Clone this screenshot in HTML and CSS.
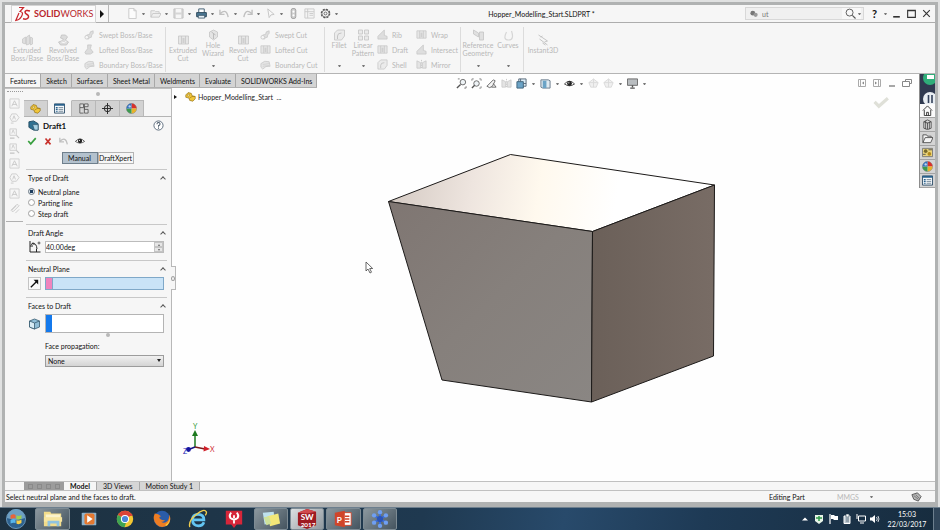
FILE: index.html
```html
<!DOCTYPE html>
<html lang="en">
<head>
    <meta charset="UTF-8">
    <title>Hopper_Modelling_Start.SLDPRT</title>
    <meta name="viewport" content="width=device-width, initial-scale=1.0">
    <link rel="stylesheet" href="styles.css">
</head>
<body>

<!-- Shared icons -->
<svg class="sprite" aria-hidden="true">
    <symbol id="i-extrude" viewBox="0 0 12 12"><path d="M1 5l3-2v7l-3-1zM5 3l3-2v9l-3 1zM9 3l2 1v6l-2 1z" fill="#dedede" stroke="#c4c4c4" stroke-width=".7"/></symbol>
    <symbol id="i-revolve" viewBox="0 0 12 12"><path d="M4 1h4l2 2-2 3 3 2-2 3H3L1 8l3-1 2-2-3-1z" fill="#dcdcdc" stroke="#c2c2c2" stroke-width=".8"/><path d="M4 8q3 2 5-1" fill="none" stroke="#f8f8f8"/></symbol>
    <symbol id="i-sweep" viewBox="0 0 12 12"><path d="M2 10q-1-4 4-4 0-4 4-4v3q-2 0-2 4-3 0-3 2z" fill="#dedede" stroke="#c6c6c6" stroke-width=".8"/><circle cx="3" cy="9" r="2" fill="#f6f6f6" stroke="#c6c6c6" stroke-width=".8"/></symbol>
    <symbol id="i-loft" viewBox="0 0 12 12"><path d="M4 1h4l-1 4 3 4-3 2H2l-1-2 3-4z" fill="#dcdcdc" stroke="#c4c4c4" stroke-width=".8"/></symbol>
    <symbol id="i-bound" viewBox="0 0 12 12"><path d="M1 5q4-4 9-2l1 5q-5-1-8 3L1 9z" fill="#e4e4e4" stroke="#c6c6c6" stroke-width=".8"/><path d="M3 6l7-1M3 8l7-1" stroke="#c6c6c6" stroke-width=".6"/></symbol>
    <symbol id="i-cut" viewBox="0 0 12 12"><path d="M1 2h10v8H1zM4 2v8M8 2v8" fill="#e6e6e6" stroke="#c6c6c6" stroke-width=".8"/><path d="M5 4h2v5H5z" fill="#cfcfcf"/></symbol>
    <symbol id="i-hole" viewBox="0 0 12 12"><path d="M2 3l4-2 4 2v5l-4 3-4-3z" fill="#e4e4e4" stroke="#c4c4c4" stroke-width=".8"/><path d="M4 3l4 3M6 5v5" stroke="#bdbdbd"/></symbol>
    <symbol id="i-fillet" viewBox="0 0 12 12"><path d="M1 4l3-3h7v6l-3 4H1z" fill="#ebebeb" stroke="#c4c4c4" stroke-width=".8"/><path d="M4 10V7q0-3 4-3" fill="none" stroke="#c4c4c4"/></symbol>
    <symbol id="i-pattern" viewBox="0 0 12 12"><path d="M1 1h4v4H1zM7 1h4v4H7zM1 7h4v4H1zM7 7h4v4H7z" fill="#eaeaea" stroke="#c8c8c8" stroke-width=".9"/></symbol>
    <symbol id="i-rib" viewBox="0 0 12 12"><path d="M1 8l7-7v6l3 1v3H1z" fill="#dedede" stroke="#c6c6c6" stroke-width=".8"/></symbol>
    <symbol id="i-mirror" viewBox="0 0 12 12"><path d="M1 2l4 2v6H1zM11 2L7 4v6h4z" fill="#e4e4e4" stroke="#c6c6c6" stroke-width=".8"/><path d="M6 1v10" stroke="#c6c6c6" stroke-dasharray="1.5 1"/></symbol>
    <symbol id="i-refgeo" viewBox="0 0 12 12"><path d="M1 1l5 3v4L1 5zM7 3h4v8H7z" fill="#e0e0e0" stroke="#c4c4c4" stroke-width=".8"/></symbol>
    <symbol id="i-curve" viewBox="0 0 12 12"><path d="M4 3Q0 11 6 11t3-9" fill="none" stroke="#d6d6d6" stroke-width="1.2"/></symbol>
    <symbol id="i-instant" viewBox="0 0 12 12"><path d="M1 1l9 6M2 5l8 6M3 3l2-1M7 8l3-1M5 9l3 2" fill="none" stroke="#c6c6c6"/></symbol>
    <symbol id="i-part" viewBox="0 0 14 12"><path d="M1 4l3-3 4 1 1 3 4 1v3l-3 3-4-1-1-3-4-1z" fill="#f0c53a" stroke="#8a6a12" stroke-width=".8"/><circle cx="4.5" cy="4.3" r="1.3" fill="#fff3b8" stroke="#8a6a12" stroke-width=".6"/><path d="M6 8l3-2 4 0" fill="none" stroke="#9b7918" stroke-width=".8"/></symbol>
    <symbol id="i-list" viewBox="0 0 12 12"><path d="M.5 1h11v10H.5z" fill="#f5f9fc" stroke="#2c4c66"/><path d="M.5 1h11v2H.5z" fill="#28618c"/><path d="M2 5h2M2 7h2M2 9h2" stroke="#28618c" stroke-width="1.2"/><path d="M5 5h5M5 7h5M5 9h5" stroke="#62788a" stroke-width=".9"/></symbol>
    <symbol id="i-ball" viewBox="0 0 12 12"><circle cx="6" cy="6" r="5.5" fill="#e8e8e8" stroke="#555" stroke-width=".5"/><path d="M6 6V.5A5.5 5.5 0 0 1 11.5 6z" fill="#d8312c"/><path d="M6 6h5.5A5.5 5.5 0 0 1 6 11.5z" fill="#e7b12b"/><path d="M6 6v5.5A5.5 5.5 0 0 1 .5 6z" fill="#3d9950"/><path d="M6 6H.5A5.5 5.5 0 0 1 6 .5z" fill="#3171c0"/><circle cx="4" cy="3.7" r="1.3" fill="#fff" opacity=".7"/></symbol>
    <symbol id="i-cube" viewBox="0 0 12 12"><path d="M1 3l5-2 5 2v6l-5 2-5-2z" fill="#8fbdd6" stroke="#35596e" stroke-width=".8"/><path d="M1 3l5 2v6l-5-2z" fill="#d8ecf5" stroke="#35596e" stroke-width=".8"/><path d="M6 5l5-2" stroke="#35596e" stroke-width=".8"/></symbol>
    <symbol id="i-eye" viewBox="0 0 12 12"><path d="M.5 6.500Q6 .5 11.500 6.500 6 10.500.5 6.500z" fill="#fff" stroke="#333" stroke-width=".9"/><circle cx="6" cy="6" r="2.600" fill="#222"/><circle cx="5.300" cy="5.200" r=".7" fill="#fff"/></symbol>
    <symbol id="i-undo" viewBox="0 0 12 12"><path d="M1 2v5h5M1.500 6Q8 0 10 10" fill="none" stroke="#c0c0c0" stroke-width="1.500"/></symbol>
    <symbol id="i-page" viewBox="0 0 12 12"><path d="M2 .5h5.500L10 3v8.500H2zM7.500.5V3H10" fill="#fcfcfc" stroke="#c8c8c8"/></symbol>
    <symbol id="i-open" viewBox="0 0 12 12"><path d="M1 10V3h4l1 1h4v2M1 10l2-4h9l-2 4z" fill="#efefef" stroke="#c8c8c8"/></symbol>
    <symbol id="i-save" viewBox="0 0 12 12"><path d="M1 1h10v10H1z" fill="#d6d6d6" stroke="#c2c2c2"/><path d="M3 1h6v4H3zM3 7h6v4H3z" fill="#f6f6f6"/></symbol>
    <symbol id="i-print" viewBox="0 0 12 12"><path d="M3 5V1h6v4" fill="#fff" stroke="#37566b"/><path d="M.7 5h10.600v4.500H.7z" fill="#4c7894" stroke="#284558"/><path d="M2.500 8h7v3h-7z" fill="#e6f0f6" stroke="#284558" stroke-width=".8"/></symbol>
    <symbol id="i-pointer" viewBox="0 0 12 12"><path d="M3 1l7 6-3.500.5-2 3z" fill="#f8f8f8" stroke="#c4c4c4"/></symbol>
    <symbol id="i-light" viewBox="0 0 12 12"><rect x="3.500" y=".5" width="5" height="11" rx="2" fill="#ccc" stroke="#a0a0a0"/><circle cx="6" cy="4" r="1.200" fill="#fff"/><circle cx="6" cy="8" r="1.200" fill="#fff"/></symbol>
    <symbol id="i-props" viewBox="0 0 12 12"><path d="M1 1h10v10H1zM4 1v10M1 4h10M6 6h4M6 8h4" fill="#f4f4f4" stroke="#cacaca"/></symbol>
    <symbol id="i-gear" viewBox="0 0 12 12"><circle cx="6" cy="6" r="4.500" fill="none" stroke="#555" stroke-width="1.500" stroke-dasharray="2.200 1.330"/><circle cx="6" cy="6" r="3.900" fill="#f8f8f8" stroke="#555" stroke-width=".8"/><circle cx="6" cy="6" r="1.600" fill="none" stroke="#555" stroke-width=".9"/></symbol>
    <symbol id="i-zoomfit" viewBox="0 0 12 12"><circle cx="7.500" cy="4.500" r="3" fill="#eef3f6" stroke="#666"/><path d="M5 7l-4 4" stroke="#555" stroke-width="1.500"/><path d="M2 1h2M11 9v2H9" stroke="#777" fill="none"/></symbol>
    <symbol id="i-ghost" viewBox="0 0 12 12"><path d="M1 5l5-4 5 4-2 5H3zM6 1v9M1 5h10" fill="#f0f0f0" stroke="#dadada"/></symbol>
    <symbol id="i-screen" viewBox="0 0 12 12"><path d="M.5 1h11v7H.5z" fill="#b9bdc0" stroke="#666"/><path d="M6 8v2M3.500 11h5" stroke="#555" stroke-width="1.500"/></symbol>
    <symbol id="i-views" viewBox="0 0 12 12"><path d="M3 1h8v8H3z" fill="#dcebf4" stroke="#567"/><path d="M1 4h7v7H1z" fill="#6ba3c6" stroke="#3c6078"/><path d="M5 1v3M8 6h3" stroke="#567"/></symbol>
    <symbol id="i-note" viewBox="0 0 12 12"><path d="M1 1h10v10H1z" fill="#f6f6f6" stroke="#d0d0d0"/><path d="M3 9l3-6 3 6M4 7h4" fill="none" stroke="#c8c8c8"/></symbol>
    <symbol id="i-balloon" viewBox="0 0 12 12"><path d="M3 1h5l3 4-3 4H3L1 5z" fill="#f6f6f6" stroke="#cdcdcd"/><path d="M4 7l1.500-4L7 7M2 11h3" fill="none" stroke="#c8c8c8"/></symbol>
    <symbol id="i-zoomnote" viewBox="0 0 12 12"><path d="M1 1h7v7H1zM3 6l1.500-4L6 6" fill="#f6f6f6" stroke="#cdcdcd"/><path d="M8 8l3 3M1 11h5" stroke="#c4c4c4" stroke-width="1.300"/></symbol>
    <symbol id="i-clip" viewBox="0 0 12 12"><path d="M2 8l6-6q2-1 3 1L5 9q-2 1-2-1l5-5M7 11l4-4" fill="none" stroke="#cbcbcb"/></symbol>
</svg>

<div class="desktop">
<div class="window">

    <header class="titlebar">
        <div class="brand">
            <svg class="brand-mark" viewBox="0 0 16 16"><path d="M4 1.500h4.500L5 5.500q4 .5 1.500 5Q4.500 14 .8 14.500L4 7" fill="none" stroke="#c8262c" stroke-width="1.200"/><path d="M15 5q-4.500-1.500-5 1 0 1.500 2 2.500 2.500 1.500 1 3.500-1.500 1.800-5 .8" fill="none" stroke="#c8262c" stroke-width="1.500"/></svg>
            <span class="brand-name"><b>SOLID</b>WORKS</span>
        </div>
        <button class="flyout" aria-label="Show menus"><i class="tri-right"></i></button>
        <div class="quick-tools">
            <button aria-label="New"><svg><use href="#i-page"/></svg></button><i class="caret"></i>
            <button aria-label="Open"><svg><use href="#i-open"/></svg></button><i class="caret"></i>
            <button aria-label="Save"><svg><use href="#i-save"/></svg></button><i class="caret"></i>
            <button aria-label="Print"><svg><use href="#i-print"/></svg></button><i class="caret"></i>
            <button aria-label="Undo"><svg><use href="#i-undo"/></svg></button><i class="caret"></i>
            <button aria-label="Redo"><svg class="flip"><use href="#i-undo"/></svg></button><i class="caret"></i>
            <button aria-label="Select"><svg><use href="#i-pointer"/></svg></button><i class="caret"></i>
            <button aria-label="Rebuild"><svg><use href="#i-light"/></svg></button>
            <button aria-label="File properties"><svg><use href="#i-props"/></svg></button>
            <button aria-label="Options"><svg><use href="#i-gear"/></svg></button><i class="caret"></i>
        </div>
        <h1 class="doc-title">Hopper_Modelling_Start.SLDPRT *</h1>
        <div class="search">
            <svg class="search-kind" viewBox="0 0 10 10"><circle cx="3.500" cy="4" r="3" fill="#777"/><circle cx="7" cy="6" r="2.600" fill="#999"/></svg>
            <input type="text" value="ut" aria-label="Search commands">
            <button aria-label="Search"><svg viewBox="0 0 12 12"><circle cx="5" cy="5" r="3.800" fill="none" stroke="#555"/><path d="M8 8l3.500 3.500" stroke="#555" stroke-width="1.300"/></svg><i class="caret"></i></button>
        </div>
        <div class="window-buttons">
            <button class="help" aria-label="Help">?</button><i class="caret"></i>
            <button aria-label="Minimize"><svg viewBox="0 0 10 10"><path d="M2 8h6" stroke="#333" stroke-width="1.500"/></svg></button>
            <button aria-label="Maximize"><svg viewBox="0 0 10 10"><path d="M1.500 2h7v6.500h-7zM1 2.500h8" fill="none" stroke="#333"/></svg></button>
            <button aria-label="Close"><svg viewBox="0 0 10 10"><path d="M2 2l6 6M8 2L2 8" stroke="#333"/></svg></button>
        </div>
    </header>

    <div class="ribbon">
        <div class="group">
            <button class="big wide"><svg><use href="#i-extrude"/></svg>Extruded Boss/Base</button>
            <button class="big wide"><svg><use href="#i-revolve"/></svg>Revolved Boss/Base</button>
            <div class="stack">
                <button><svg><use href="#i-sweep"/></svg>Swept Boss/Base</button>
                <button><svg><use href="#i-loft"/></svg>Lofted Boss/Base</button>
                <button><svg><use href="#i-bound"/></svg>Boundary Boss/Base</button>
            </div>
        </div>
        <div class="group">
            <button class="big"><svg><use href="#i-cut"/></svg>Extruded Cut</button>
            <button class="big menu"><svg><use href="#i-hole"/></svg>Hole Wizard<i class="caret"></i></button>
            <button class="big"><svg><use href="#i-cut"/></svg>Revolved Cut</button>
            <div class="stack">
                <button><svg><use href="#i-sweep"/></svg>Swept Cut</button>
                <button><svg><use href="#i-cut"/></svg>Lofted Cut</button>
                <button><svg><use href="#i-bound"/></svg>Boundary Cut</button>
            </div>
        </div>
        <div class="group">
            <button class="big slim menu"><svg><use href="#i-fillet"/></svg>Fillet<i class="caret"></i></button>
            <button class="big slim menu"><svg><use href="#i-pattern"/></svg>Linear Pattern<i class="caret"></i></button>
            <div class="stack">
                <button><svg><use href="#i-rib"/></svg>Rib</button>
                <button><svg><use href="#i-cut"/></svg>Draft</button>
                <button><svg><use href="#i-fillet"/></svg>Shell</button>
            </div>
            <div class="stack">
                <button><svg><use href="#i-cut"/></svg>Wrap</button>
                <button><svg><use href="#i-rib"/></svg>Intersect</button>
                <button><svg><use href="#i-mirror"/></svg>Mirror</button>
            </div>
        </div>
        <div class="group">
            <button class="big menu"><svg><use href="#i-refgeo"/></svg>Reference Geometry<i class="caret"></i></button>
            <button class="big menu"><svg><use href="#i-curve"/></svg>Curves<i class="caret"></i></button>
        </div>
        <div class="group">
            <button class="big wide"><svg><use href="#i-instant"/></svg>Instant3D</button>
        </div>
    </div>

    <div class="workspace">
        <div class="work-column">
            <div class="tab-row">
                <nav class="command-tabs">
                    <button class="active">Features</button>
                    <button>Sketch</button>
                    <button>Surfaces</button>
                    <button>Sheet Metal</button>
                    <button>Weldments</button>
                    <button>Evaluate</button>
                    <button>SOLIDWORKS Add-Ins</button>
                </nav>
                <div class="doc-buttons">
                    <button aria-label="Dock left"><svg viewBox="0 0 10 10"><path d="M1.500 1.500h7v7h-7zM3.500 1.500v7" fill="none" stroke="#aaa"/><path d="M7 3.500v3L5 5z" fill="#888"/></svg></button>
                    <button aria-label="Dock right"><svg viewBox="0 0 10 10"><path d="M1.500 1.500h7v7h-7zM6.500 1.500v7" fill="none" stroke="#aaa"/><path d="M3 3.500v3L5 5z" fill="#888"/></svg></button>
                    <button aria-label="Minimize document"><svg viewBox="0 0 10 10"><path d="M2 8h6" stroke="#777" stroke-width="1.300"/></svg></button>
                    <button aria-label="Restore document"><svg viewBox="0 0 10 10"><path d="M3.500 3.500v-2h6v4h-2M.5 3.500h7v5h-7z" fill="none" stroke="#888"/></svg></button>
                </div>
            </div>

            <div class="document">
                <aside class="tool-strip">
                    <button aria-label="Smart dimension"><svg><use href="#i-note"/></svg></button>
                    <button aria-label="Balloon"><svg><use href="#i-balloon"/></svg></button>
                    <button aria-label="Note"><svg><use href="#i-zoomnote"/></svg></button>
                    <button aria-label="Surface finish"><svg><use href="#i-zoomnote"/></svg></button>
                    <button aria-label="Weld symbol"><svg><use href="#i-note"/></svg></button>
                    <button aria-label="Datum"><svg><use href="#i-balloon"/></svg></button>
                    <button aria-label="Tolerance"><svg><use href="#i-note"/></svg></button>
                    <button aria-label="Attach"><svg><use href="#i-clip"/></svg></button>
                </aside>

                <section class="manager">
                    <div class="grip"></div>
                    <div class="manager-tabs">
                        <button aria-label="Feature tree"><svg><use href="#i-part"/></svg></button>
                        <button class="active" aria-label="Property manager"><svg><use href="#i-list"/></svg></button>
                        <button aria-label="Configurations"><svg viewBox="0 0 12 12"><path d="M2 1h4v4H2zM2 5v6h4M7 1h4v3H7v3h4v4H7z" fill="#ddd" stroke="#555" stroke-width=".9"/></svg></button>
                        <button aria-label="DimXpert"><svg viewBox="0 0 12 12"><circle cx="6" cy="6" r="3.500" fill="none" stroke="#222"/><path d="M6 0v12M0 6h12" stroke="#222"/></svg></button>
                        <button aria-label="Display manager"><svg><use href="#i-ball"/></svg></button>
                    </div>

                    <div class="feature-title">
                        <svg viewBox="0 0 12 12"><path d="M1 2l5-1 5 3v7H6L1 8z" fill="#2f7192" stroke="#214a60"/><path d="M5 5h6v6H7z" fill="#a9d2e4" stroke="#315b70" stroke-width=".8"/></svg>
                        <h2>Draft1</h2>
                        <button aria-label="Help"><svg viewBox="0 0 12 12"><circle cx="6" cy="6" r="5" fill="#fff" stroke="#567"/><path d="M4.300 4.600q0-1.800 1.700-1.800t1.700 1.500Q7.700 5.400 6 6.300v1M6 8.300v1.200" fill="none" stroke="#456" stroke-width="1.100"/></svg></button>
                    </div>
                    <div class="confirm-row">
                        <button aria-label="OK"><svg viewBox="0 0 12 12"><path d="M1.500 6l3 3.500L10.500 2.500" fill="none" stroke="#3aa040" stroke-width="2"/></svg></button>
                        <button aria-label="Cancel"><svg viewBox="0 0 12 12"><path d="M3 3l6 7M9 3l-6 7" stroke="#c8322c" stroke-width="2"/></svg></button>
                        <button aria-label="Undo"><svg><use href="#i-undo"/></svg></button>
                        <button aria-label="Preview"><svg><use href="#i-eye"/></svg></button>
                    </div>
                    <div class="mode-switch">
                        <button class="active">Manual</button><button>DraftXpert</button>
                    </div>

                    <fieldset class="prop-group">
                        <div class="prop-head"><h3>Type of Draft</h3><i class="chevron"></i></div>
                        <label class="radio"><input type="radio" name="draft" checked>Neutral plane</label>
                        <label class="radio"><input type="radio" name="draft">Parting line</label>
                        <label class="radio"><input type="radio" name="draft">Step draft</label>
                    </fieldset>

                    <fieldset class="prop-group">
                        <div class="prop-head"><h3><label for="angle">Draft Angle</label></h3><i class="chevron"></i></div>
                        <div class="prop-row">
                            <svg class="prop-icon" viewBox="0 0 12 12"><path d="M1.500 0v11H12M1.500 5h3M8 11V8M4 2q4 0 4.500 6M3 4l1-2 2 2" fill="none" stroke="#222"/><circle cx="10.500" cy="2" r="1" fill="none" stroke="#222" stroke-width=".7"/></svg>
                            <div class="spin">
                                <input type="text" id="angle" value="40.00deg">
                                <span class="spin-buttons"><button aria-label="Increase"></button><button aria-label="Decrease"></button></span>
                            </div>
                        </div>
                    </fieldset>

                    <fieldset class="prop-group">
                        <div class="prop-head"><h3><label for="plane">Neutral Plane</label></h3><i class="chevron"></i></div>
                        <div class="prop-row">
                            <button class="reverse" aria-label="Reverse direction"><svg viewBox="0 0 12 12"><path d="M2 10l6-6" stroke="#111" stroke-width="1.500"/><path d="M5 2h5v5z" fill="#111"/></svg></button>
                            <div class="pick pick-pink"><input type="text" id="plane"></div>
                        </div>
                    </fieldset>

                    <fieldset class="prop-group">
                        <div class="prop-head"><h3><label for="faces">Faces to Draft</label></h3><i class="chevron"></i></div>
                        <div class="prop-row">
                            <svg class="prop-icon"><use href="#i-cube"/></svg>
                            <div class="pick pick-blue"><textarea id="faces" rows="1"></textarea></div>
                        </div>
                        <div class="grip grip-faces"></div>
                        <div class="propagation">
                            <label for="propagation">Face propagation:</label>
                            <div class="select-wrap">
                                <select id="propagation"><option>None</option></select>
                                <i class="tri-down"></i>
                            </div>
                        </div>
                    </fieldset>
                    <button class="collapse" aria-label="Collapse panel"></button>
                </section>

                <main class="viewport">
                    <svg class="scene" viewBox="0 0 747 393">
                        <defs>
                            <linearGradient id="top" gradientUnits="userSpaceOnUse" x1="220" y1="105" x2="440" y2="140">
                                <stop offset="0" stop-color="#d5cbc4"/>
                                <stop offset=".35" stop-color="#eee5df"/>
                                <stop offset=".65" stop-color="#fff9ee"/>
                                <stop offset="1" stop-color="#ffffff"/>
                            </linearGradient>
                            <linearGradient id="front" x1="0" y1="0" x2="1" y2="1">
                                <stop offset="0" stop-color="#7f7672"/>
                                <stop offset=".5" stop-color="#86807c"/>
                                <stop offset="1" stop-color="#8a8683"/>
                            </linearGradient>
                            <linearGradient id="side" x1="0" y1="0" x2="1" y2="0">
                                <stop offset="0" stop-color="#6b6059"/>
                                <stop offset="1" stop-color="#786c65"/>
                            </linearGradient>
                        </defs>
                        <g stroke="#1c1a19" stroke-width="1" stroke-linejoin="round">
                            <path d="M216.500 113.500L338.500 66.500 542.500 97 420.500 143.500z" fill="url(#top)"/>
                            <path d="M216.500 113.500L420.500 143.500 419.500 314 270 292z" fill="url(#front)"/>
                            <path d="M420.500 143.500L542.500 97 541.500 268 419.500 314z" fill="url(#side)"/>
                        </g>
                        <path d="M194 174v9l2-2 2 4 1.500-.8-1.800-3.700h3z" fill="#fff" stroke="#444" stroke-width=".8"/>
                        <!-- Axis triad -->
                        <path d="M23 359v-13" stroke="#1d7a1f" stroke-width="1.500"/><path d="M20 348l3-6 3 6z" fill="#1d7a1f"/>
                        <path d="M23 359l10 2" stroke="#7d1a1a" stroke-width="1.500"/><path d="M32 358l6 3-6.500 2.500z" fill="#d0202a"/>
                        <path d="M23 359l-5 2" stroke="#161683" stroke-width="1.500"/><circle cx="16.500" cy="361.500" r="2.400" fill="#1414a0"/>
                        <g class="axis"><text x="21" y="341" fill="#2f9a35">Y</text><text x="38" y="364" fill="#d0303a">X</text><text x="11" y="366" fill="#2222b0">Z</text></g>
                    </svg>
                    <div class="view-tools">
                        <button aria-label="Zoom to fit"><svg><use href="#i-zoomfit"/></svg></button>
                        <button aria-label="Zoom to area"><svg viewBox="0 0 12 12"><circle cx="6" cy="6" r="3" fill="#eef3f6" stroke="#666"/><path d="M4 8l-3 3" stroke="#555" stroke-width="1.500"/><path d="M1 3V1h2M9 1h2v2M11 9v2H9" fill="none" stroke="#888"/></svg></button>
                        <button aria-label="Previous view"><svg viewBox="0 0 12 12"><path d="M1 9l7-7 2 1-3 6q-3 3-6 0zM8 6l3 4H6" fill="#f4f4f4" stroke="#666"/></svg></button>
                        <button aria-label="Section view"><svg><use href="#i-mirror"/></svg></button>
                        <button aria-label="View orientation"><svg><use href="#i-views"/></svg></button><i class="caret"></i>
                        <button aria-label="Display style"><svg viewBox="0 0 12 12"><path d="M1 2h8l2 1v8H3L1 10z" fill="#dfeaf1" stroke="#678"/><path d="M3 3h4v8H3z" fill="#6ba3c6"/></svg></button><i class="caret"></i>
                        <button aria-label="Hide or show items"><svg><use href="#i-eye"/></svg></button><i class="caret"></i>
                        <button aria-label="Edit appearance"><svg><use href="#i-ghost"/></svg></button>
                        <button aria-label="Apply scene"><svg><use href="#i-ghost"/></svg></button><i class="caret"></i>
                        <button aria-label="View settings"><svg><use href="#i-screen"/></svg></button><i class="caret"></i>
                    </div>
                    <div class="flyout-tree"><i class="tri-right small"></i><svg><use href="#i-part"/></svg><span>Hopper_Modelling_Start &nbsp;...</span></div>
                    <button class="confirm-corner" aria-label="Accept"><svg viewBox="0 0 16 12"><path d="M1.500 5.500l4 4L14 2" fill="none" stroke="#dfe0d8" stroke-width="3"/></svg></button>
                </main>
            </div>
        </div>

        <aside class="task-pane">
            <div class="recorder">
                <svg viewBox="0 0 16 30"><circle cx="10" cy="4" r="7" fill="#2fae79"/><path d="M7 1h7v4H7z" fill="#fff"/><circle cx="10" cy="25" r="7" fill="#e8edf2"/><path d="M8.500 21v8M12 21v8" stroke="#33415a" stroke-width="1.600"/></svg>
            </div>
            <button class="active" aria-label="Resources"><svg viewBox="0 0 12 12"><path d="M1 6l5-5 5 5M2.500 5.500v6h7v-6M5 11.500V8h2v3.500" fill="none" stroke="#333"/></svg></button>
            <button aria-label="Design library"><svg viewBox="0 0 12 12"><path d="M2 3l4-2 4 2v7l-4 1.500L2 10zM4 2v9M6 4v7M8 3v8M2 3l4 1.500L10 3" fill="#ddd" stroke="#444" stroke-width=".9"/></svg></button>
            <button aria-label="File explorer"><svg viewBox="0 0 12 12"><path d="M1 10.500V2h4l1 1.500h4V5M1 10.500L3.500 5H12l-2.500 5.500z" fill="#f4f4f4" stroke="#444" stroke-width=".9"/></svg></button>
            <button aria-label="View palette"><svg viewBox="0 0 12 12"><path d="M.5 1.500h11v9H.5z" fill="#ebd47a" stroke="#777"/><circle cx="4" cy="4.500" r="2" fill="#776a2c"/><circle cx="8" cy="7.500" r="2" fill="#b18a1c"/><path d="M7 3h4M1 8h3" stroke="#555"/></svg></button>
            <button aria-label="Appearances"><svg><use href="#i-ball"/></svg></button>
            <button aria-label="Custom properties"><svg><use href="#i-list"/></svg></button>
        </aside>
    </div>

    <div class="sheet-tabs">
        <div class="sheet-nav"><i></i><i></i><i></i><i></i></div>
        <button class="active">Model</button>
        <button>3D Views</button>
        <button>Motion Study 1</button>
    </div>

    <footer class="status">
        <span class="hint">Select neutral plane and the faces to draft.</span>
        <span class="mode">Editing Part</span>
        <span class="units">MMGS<i class="caret"></i></span>
        <svg class="tag" viewBox="0 0 12 12"><path d="M1 4l6-2 4 4-3 5-5-2z" fill="#b5b5b5" stroke="#555"/><path d="M3 5l5 4M5 4l4 4" stroke="#666" stroke-width=".8"/></svg>
    </footer>
</div>

<div class="taskbar">
    <div class="apps">
        <button aria-label="Start"><svg viewBox="0 0 22 22"><circle cx="11" cy="11" r="10.500" fill="#2c618f" stroke="#6f9cbd"/><path d="M1 10a10 10 0 0 1 20 0q-10 4-20 0z" fill="#6d9fc2"/><path d="M5 7q3-2 5.500-.5v4Q8 9.500 5 11z" fill="#e8643a"/><path d="M11.500 7q3 1.500 5.500-.5v4q-3 2-5.500.5z" fill="#9fcf4c"/><path d="M5 12q3-1.500 5.500-.5v4Q8 14.500 5 16z" fill="#57b5ea"/><path d="M11.500 12q3 1.500 5.500-.5v4q-3 2-5.500.5z" fill="#f8cf47"/></svg></button>
        <button class="open" aria-label="Explorer"><svg viewBox="0 0 22 22"><path d="M1 3h7l1 2h11v14H1z" fill="#f2dc8b"/><path d="M3 6h16v5H3z" fill="#fbf3cc"/><path d="M1 9h20v5H1z" fill="#f7e59f"/><path d="M5 13h13v6h-3v-3H8v3H5z" fill="#8fc3e0"/></svg></button>
        <button aria-label="Media player"><svg viewBox="0 0 22 22"><rect x="3" y="4" width="16" height="14" rx="1" fill="#8eb3cd"/><rect x="6" y="5" width="11" height="12" rx="2" fill="#e47830"/><path d="M9 7l6 4-6 4z" fill="#fff"/></svg></button>
        <button aria-label="Chrome"><svg viewBox="0 0 22 22"><circle cx="11" cy="11" r="9" fill="#f3c732"/><path d="M11 11L3.200 6.500A9 9 0 0 1 18.800 6.500z" fill="#da4436"/><path d="M3.200 6.500A9 9 0 0 0 10.500 20L13 12z" fill="#3fa453"/><path d="M11 6.500h8" stroke="#da4436" stroke-width="2"/><circle cx="11" cy="11" r="4.500" fill="#fff"/><circle cx="11" cy="11" r="3.400" fill="#4a86d8"/></svg></button>
        <button aria-label="Firefox"><svg viewBox="0 0 22 22"><circle cx="11" cy="11" r="9" fill="#2a5ca8"/><path d="M3 5q-3 7 2 12t12 1q5-5 2-12 0 6-3 8t-6 0q4 0 4-2-4 1-6-2 0-2 2-2-3-3-7-3z" fill="#ed7d23"/><path d="M15 17q5-3 4-9 2 8-4 11z" fill="#f8c936"/></svg></button>
        <button aria-label="Internet Explorer"><svg viewBox="0 0 22 22"><path d="M17.500 14.500Q16 18.500 11.500 18.500 5 18 5 12t6-6q6.500 0 6.500 6H6" fill="none" stroke="#63c5f2" stroke-width="3"/><path d="M2 20Q0 13 9 6t11-3q1 1-1 4" fill="none" stroke="#f1cf4e" stroke-width="1.500"/></svg></button>
        <button aria-label="Capture"><svg viewBox="0 0 22 22"><path d="M2 2h18v15h-6l-3 4-3-4H2z" fill="#d6263a"/><path d="M8 4q-3 3-1 6 4 3 8 0 2-3-1-6M11 7v3M11 12v4" fill="none" stroke="#fff" stroke-width="2"/></svg></button>
        <button class="open" aria-label="Sticky notes"><svg viewBox="0 0 22 22"><path d="M2 4l12-1 1 12-11 2z" fill="#bfe1ec"/><path d="M7 8l12-3 2 11-11 3z" fill="#f3e878"/><path d="M3 9l6-1 2 8-5 2z" fill="#cfe29a"/></svg></button>
        <button class="open lit" aria-label="SOLIDWORKS 2017"><svg viewBox="0 0 22 22"><path d="M1 4l10-4 10 3v15l-10 4-10-4z" fill="#9e1b22"/><path d="M1 4l10-4 10 3-10 2z" fill="#d14a4e"/><text x="4" y="12" class="sw">SW</text><text x="4" y="20" class="year">2017</text></svg></button>
        <button class="open" aria-label="PowerPoint"><svg viewBox="0 0 22 22"><path d="M10 4h10v14H10z" fill="#fff" stroke="#d0452a"/><path d="M13 8h5M13 11h5M13 14h5" stroke="#d0452a" stroke-width="1.500"/><path d="M2 4l11-2v18L2 18z" fill="#d0452a"/><text x="4" y="15" class="ppt">P</text></svg></button>
        <button class="open" aria-label="GoToWebinar"><svg viewBox="0 0 22 22"><g stroke="#3c6ed8" stroke-width="2.200"><path d="M11 3v16M4 7l14 8M18 7L4 15"/></g><g fill="#6f9ff2"><circle cx="11" cy="3.500" r="2.400"/><circle cx="11" cy="18.500" r="2.400"/><circle cx="4.500" cy="7" r="2.400"/><circle cx="17.500" cy="15" r="2.400"/><circle cx="17.500" cy="7" r="2.400"/><circle cx="4.500" cy="15" r="2.400"/></g><circle cx="11" cy="11" r="3.400" fill="#2b54b8"/></svg></button>
    </div>
    <div class="tray">
        <svg viewBox="0 0 10 10"><path d="M2 6.500L5 3.500l3 3z" fill="#fff"/></svg>
        <svg viewBox="0 0 10 10"><path d="M1 1h8v6L5 10 1 7z" fill="#e8f4e8"/><path d="M2 4h6M5 2v5" stroke="#2f9a4a" stroke-width="1.500"/></svg>
        <svg viewBox="0 0 10 10"><path d="M2 0v10" stroke="#fff" stroke-width="1.200"/><path d="M3 1h3l1 1h3v4H6L5 5H3z" fill="#fff"/></svg>
        <svg viewBox="0 0 10 10"><path d="M2 2h6v7.500H2z" fill="#b9c5ce" stroke="#fff"/><path d="M4 0h3v3H4zM4 5h3M4 7h3" fill="#fff" stroke="#34495c" stroke-width=".6"/></svg>
        <svg viewBox="0 0 10 10"><path d="M2.500 2h7v5h-7zM4 9h4M1 0v5" fill="none" stroke="#fff"/></svg>
        <svg viewBox="0 0 10 10"><path d="M0 3.500h2L5 1v8L2 6.500H0z" fill="#fff"/><path d="M6.500 3q1.500 2 0 4M8 2q2 3 0 6" fill="none" stroke="#fff" stroke-width=".8"/></svg>
        <div class="clock"><span>15:03</span><span>22/03/2017</span></div>
        <button class="show-desktop" aria-label="Show desktop"></button>
    </div>
</div>
</div>

</body>
</html>
```

FILE: styles.css
```css
* {
    box-sizing: border-box;
}

body {
    margin: 0;
    font-family: Lato, "Open Sans", sans-serif;
    font-size: 7px;
    line-height: 8px;
    color: #111;
}

button,
input,
select,
textarea {
    font: inherit;
    color: inherit;
    margin: 0;
    padding: 0;
    border: none;
    background: none;
    outline: none;
}

button {
    display: flex;
    align-items: center;
    justify-content: center;
    flex-shrink: 0;
}

h1, h2, h3 {
    margin: 0;
    font-size: inherit;
    font-weight: normal;
}

svg {
    display: block;
    flex-shrink: 0;
    width: 11px;
    height: 11px;
}

.sprite {
    position: absolute;
    width: 0;
    height: 0;
}

.flip {
    transform: scaleX(-1);
}

.caret {
    flex-shrink: 0;
    border: 1px solid transparent;
    border-top: 2px solid #777;
    border-bottom: none;
    width: 3px;
}

.tri-right {
    border: 4px solid transparent;
    border-left: 4px solid #111;
    border-right: none;
}

.tri-right.small {
    border-width: 2px;
    border-left-width: 3px;
}

/* Window frame */
.desktop {
    display: flex;
    flex-direction: column;
    height: 100vh;
    background: #e0e1e1;
}

.window {
    flex: 1;
    min-height: 0;
    display: flex;
    flex-direction: column;
    margin: 2px 2px 0;
    border: 3px solid #b0b2b2;
    border-bottom-width: 5px;
    background: #f6f6f6;
}

/* Title bar */
.titlebar {
    display: flex;
    align-items: center;
    height: 18px;
    border-bottom: 1px solid #adadad;
}

.brand {
    display: flex;
    align-items: center;
    gap: 3px;
    height: 18px;
    width: 85px;
    margin-left: 6px;
    padding-left: 3px;
    border: 1px solid #d4d4d4;
    background: #fbfbfb;
}

.brand-mark {
    width: 16px;
    height: 16px;
}

.brand-name {
    font-size: 9px;
    color: #b8272d;
}

.flyout {
    width: 13px;
    height: 17px;
    border-right: 1px solid #b8b8b8;
}

.quick-tools {
    display: flex;
    align-items: center;
    gap: 4px;
    margin-left: 17px;
}

.quick-tools button {
    width: 12px;
}

.doc-title {
    flex: 1;
    text-align: center;
}

.search {
    display: flex;
    align-items: center;
    gap: 4px;
    width: 119px;
    height: 13px;
    padding: 0 2px 0 4px;
    border: 1px solid #d8d8d8;
    background: #f0f0f0;
}

.search-kind {
    width: 8px;
    height: 8px;
}

.search input {
    flex: 1;
    min-width: 0;
    color: #777;
}

.search button {
    gap: 2px;
    height: 11px;
    padding-left: 3px;
    background: #f8f8f8;
}

.window-buttons {
    display: flex;
    align-items: center;
    gap: 4px;
    margin: 0 3px 0 5px;
}

.window-buttons button {
    width: 11px;
}

.window-buttons .help {
    font-size: 11px;
    font-weight: bold;
}

/* Ribbon */
.ribbon {
    display: grid;
    grid-template-columns: 161px 159px 136px 63px 1fr;
    height: 51px;
    padding-top: 4px;
    border-bottom: 1px solid #b4b4b4;
    color: #b8b8b8;
}

.group {
    display: flex;
    height: 45px;
    padding-left: 2px;
    border-right: 1px solid #dcdcdc;
}

.group:first-child {
    padding-left: 5px;
    gap: 2px;
}

.group:last-child {
    border-right: none;
}

.big {
    position: relative;
    flex-direction: column;
    justify-content: flex-start;
    width: 30px;
    padding-top: 7px;
    text-align: center;
}

.big.wide {
    width: 34px;
}

.big.slim {
    width: 24px;
}

.big.menu {
    padding-top: 2px;
}

.big svg {
    width: 13px;
    height: 12px;
}

.big .caret {
    position: absolute;
    bottom: 5px;
}

.stack {
    display: flex;
    flex-direction: column;
    padding-left: 2px;
}

.group .stack + .stack {
    padding-left: 8px;
}

.stack button {
    justify-content: flex-start;
    gap: 4px;
    height: 15px;
    white-space: nowrap;
}

/* Work area */
.workspace {
    flex: 1;
    min-height: 0;
    display: flex;
    background: #fefefe;
}

.work-column {
    flex: 1;
    min-width: 0;
    display: flex;
    flex-direction: column;
}

.tab-row {
    display: flex;
    justify-content: space-between;
    height: 14px;
}

.command-tabs {
    display: flex;
    border-bottom: 1px solid #b0b0b0;
}

.command-tabs button {
    padding: 0 4px 0 5px;
    border-right: 1px solid #a8a8a8;
    background: #d4d4d4;
}

.command-tabs .active {
    background: #f6f6f6;
}

.doc-buttons {
    display: flex;
    align-items: center;
    gap: 5px;
    padding: 4px 7px 0 0;
}

.doc-buttons svg {
    width: 10px;
    height: 10px;
}

.document {
    flex: 1;
    min-height: 0;
    display: flex;
}

.tool-strip {
    display: flex;
    flex-direction: column;
    align-items: center;
    gap: 4px;
    width: 19px;
    padding-top: 10px;
    border-top: 1px solid #c0c0c0;
    background: #f6f6f6;
}

.tool-strip::before {
    content: "";
    width: 16px;
    margin-top: -8px;
    margin-bottom: 2px;
    border-top: 1px dotted #999;
}

.tool-strip::after {
    content: "";
    width: 17px;
    margin-top: 3px;
    border-top: 1px solid #b0b0b0;
}

/* Property manager */
.manager {
    position: relative;
    width: 148px;
    border-top: 1px solid #c0c0c0;
    border-right: 1px solid #b8b8b8;
    background: #f6f6f6;
}

.grip {
    width: 4px;
    height: 4px;
    margin: 3px auto 4px;
    border-radius: 2px;
    background: #b8b8b8;
}

.manager-tabs {
    display: flex;
    border-bottom: 1px solid #b4b4b4;
}

.manager-tabs button {
    width: 24px;
    height: 16px;
    border: 1px solid #b8b8b8;
    border-left: none;
    border-bottom: none;
    background: #d2d2d2;
}

.manager-tabs .active {
    border-top-color: #f6f6f6;
    background: #f6f6f6;
}

.feature-title {
    display: flex;
    align-items: center;
    gap: 4px;
    height: 17px;
    padding: 0 7px 0 4px;
}

.feature-title h2 {
    flex: 1;
    font-size: 8px;
    font-weight: bold;
}

.confirm-row {
    display: flex;
    gap: 6px;
    height: 15px;
    padding: 0 3px 2px;
}

.confirm-row button {
    width: 10px;
}

.confirm-row svg {
    width: 10px;
    height: 10px;
}

.mode-switch {
    display: flex;
    justify-content: center;
    padding: 3px 0 5px;
}

.mode-switch button {
    width: 36px;
    height: 12px;
    border: 1px solid #b4b4b4;
}

.mode-switch .active {
    border-color: #6f7f8c;
    background: #b3c1cd;
}

.prop-group {
    min-width: 0;
    margin: 0 4px 0 2px;
    padding: 0 0 7px 2px;
    border: none;
    border-top: 1px solid #c8c8c8;
}

.prop-head {
    display: flex;
    align-items: center;
    justify-content: space-between;
    height: 16px;
    padding-right: 2px;
}

.chevron {
    width: 4px;
    height: 4px;
    margin-top: 2px;
    border-top: 1px solid #555;
    border-left: 1px solid #555;
    transform: rotate(45deg);
}

.radio {
    display: flex;
    align-items: center;
    gap: 3px;
    height: 11px;
}

.radio input {
    appearance: none;
    width: 7px;
    height: 7px;
    border: 1px solid #a0a0a0;
    border-radius: 50%;
    background: #fff;
}

.radio input:checked {
    border-color: #6a7884;
    background: radial-gradient(#1d3c5c 40%, #dfe7ee 55%);
}

.radio:last-child {
    margin-bottom: -2px;
}

.prop-row {
    display: flex;
    align-items: center;
    gap: 4px;
    padding-right: 3px;
}

.prop-icon {
    width: 13px;
    height: 12px;
}

.spin {
    flex: 1;
    display: flex;
    height: 12px;
    border: 1px solid #bcbcbc;
    background: #fff;
}

.spin input {
    flex: 1;
    min-width: 0;
}

.spin-buttons {
    display: flex;
    flex-direction: column;
    width: 9px;
}

.spin-buttons button {
    flex: 1;
    border: 1px solid #c4c4c4;
    background: #e6e6e6;
}

.spin-buttons button::before {
    content: "";
    border: 1px solid transparent;
    border-bottom: 2px solid #666;
    border-top: none;
}

.spin-buttons button:last-child::before {
    transform: rotate(180deg);
}

.reverse {
    width: 13px;
    height: 13px;
    border: 1px solid #c4c4c4;
    background: #fafafa;
}

.pick {
    flex: 1;
    display: flex;
    height: 13px;
    border: 1px solid #b4b4b4;
    background: #fff;
}

.pick::before {
    content: "";
    width: 6px;
}

.pick input,
.pick textarea {
    flex: 1;
    min-width: 0;
    resize: none;
}

.pick-pink {
    border-color: #7fa8c8;
    background: #c9e3f7;
}

.pick-pink::before {
    border-right: 1px solid #7fa8c8;
    background: #f084bd;
}

.pick-blue {
    height: 19px;
}

.pick-blue::before {
    background: #1479ec;
}

.grip-faces {
    margin: 0 auto 5px 78px;
}

.propagation {
    display: flex;
    flex-direction: column;
    gap: 5px;
    padding: 0 3px 0 17px;
}

.select-wrap {
    position: relative;
}

.select-wrap select {
    appearance: none;
    display: block;
    width: 100%;
    height: 12px;
    padding-left: 2px;
    border: 1px solid #9c9c9c;
    background: linear-gradient(#f0f0f0, #d4d4d4);
}

.tri-down {
    position: absolute;
    right: 3px;
    top: 4px;
    border: 2px solid transparent;
    border-top: 3px solid #222;
    border-bottom: none;
}

.collapse {
    position: absolute;
    z-index: 1;
    right: -5px;
    top: 177px;
    width: 5px;
    height: 24px;
    border: 1px solid #b8b8b8;
    border-left: none;
    background: #f6f6f6;
}

.collapse::before {
    content: "";
    width: 3px;
    height: 3px;
    border: 1px solid #999;
    border-radius: 50%;
}

/* Graphics area */
.viewport {
    position: relative;
    flex: 1;
    min-width: 0;
}

.scene {
    position: absolute;
    inset: 0;
    width: 100%;
    height: 100%;
}

.axis {
    font-size: 7px;
}

.view-tools {
    position: absolute;
    top: -10px;
    left: 12px;
    right: 0;
    display: flex;
    align-items: center;
    justify-content: center;
    gap: 4px;
}

.view-tools .caret {
    margin: 0 1px;
}

.flyout-tree {
    position: absolute;
    top: 3px;
    left: 2px;
    display: flex;
    align-items: center;
    color: #222;
}

.flyout-tree svg {
    margin: 0 2px 0 8px;
}

.confirm-corner {
    position: absolute;
    top: 8px;
    right: 29px;
}

.confirm-corner svg {
    width: 17px;
    height: 13px;
}

/* Task pane */
.task-pane {
    width: 16px;
    border-left: 1px solid #8c8c8c;
    align-self: flex-start;
}

.recorder {
    height: 30px;
    overflow: hidden;
    background: #303a50;
}

.recorder svg {
    width: 16px;
    height: 30px;
}

.task-pane button {
    width: 15px;
    height: 14px;
    border-bottom: 1px solid #a4a4a4;
    background: #d4d4d4;
}

.task-pane .active {
    background: #fafafa;
}

/* Bottom tabs and status bar */
.sheet-tabs {
    display: flex;
    height: 10px;
    padding-left: 19px;
    border-top: 1px solid #c0c0c0;
    border-bottom: 1px solid #c0c0c0;
}

.sheet-nav {
    display: flex;
    align-items: center;
    justify-content: space-evenly;
    width: 40px;
    background: #9c9c9c;
}

.sheet-nav i {
    width: 5px;
    height: 5px;
    border: 1px solid #8a8a8a;
}

.sheet-tabs button {
    padding: 0 6px;
    border-right: 1px solid #a8a8a8;
    background: #d6d6d6;
}

.sheet-tabs .active {
    font-weight: bold;
    background: #f6f6f6;
}

.status {
    display: flex;
    align-items: center;
    height: 11px;
    padding: 0 13px 0 1px;
}

.hint {
    flex: 1;
}

.mode {
    width: 68px;
}

.units {
    display: flex;
    align-items: center;
    justify-content: space-between;
    width: 36px;
    margin-right: 38px;
    color: #b8b8b8;
}

/* Taskbar */
.taskbar {
    display: flex;
    justify-content: space-between;
    height: 23px;
    border-top: 1px solid #6d7f8e;
    background: linear-gradient(100deg, #1d3140, #1f3950 45%, #284a6b 60%, #1e3a55 75%, #172c3e);
}

.apps {
    display: grid;
    grid-template-columns: repeat(11, 1fr);
    width: 400px;
    margin-left: -2px;
}

.apps button {
    margin: 0 1px;
}

.apps svg {
    width: 20px;
    height: 20px;
}

.apps .open {
    border: 1px solid #7d8b94;
    border-radius: 2px;
    background: linear-gradient(135deg, #8b979e, #45545f);
}

.apps .lit {
    background: linear-gradient(135deg, #dcdfe1, #8f989e);
}

.sw,
.year,
.ppt {
    font-size: 7px;
    font-weight: bold;
    fill: #fff;
}

.sw,
.ppt {
    font-size: 9px;
}

.tray {
    display: flex;
    align-items: center;
    gap: 4px;
    color: #fff;
}

.tray svg {
    width: 10px;
    height: 10px;
}

.clock {
    display: flex;
    flex-direction: column;
    align-items: center;
    gap: 2px;
    width: 44px;
    margin-left: 1px;
}

.show-desktop {
    width: 7px;
    height: 22px;
    border-left: 1px solid #6d7f8e;
    background: #31465a;
}
```
